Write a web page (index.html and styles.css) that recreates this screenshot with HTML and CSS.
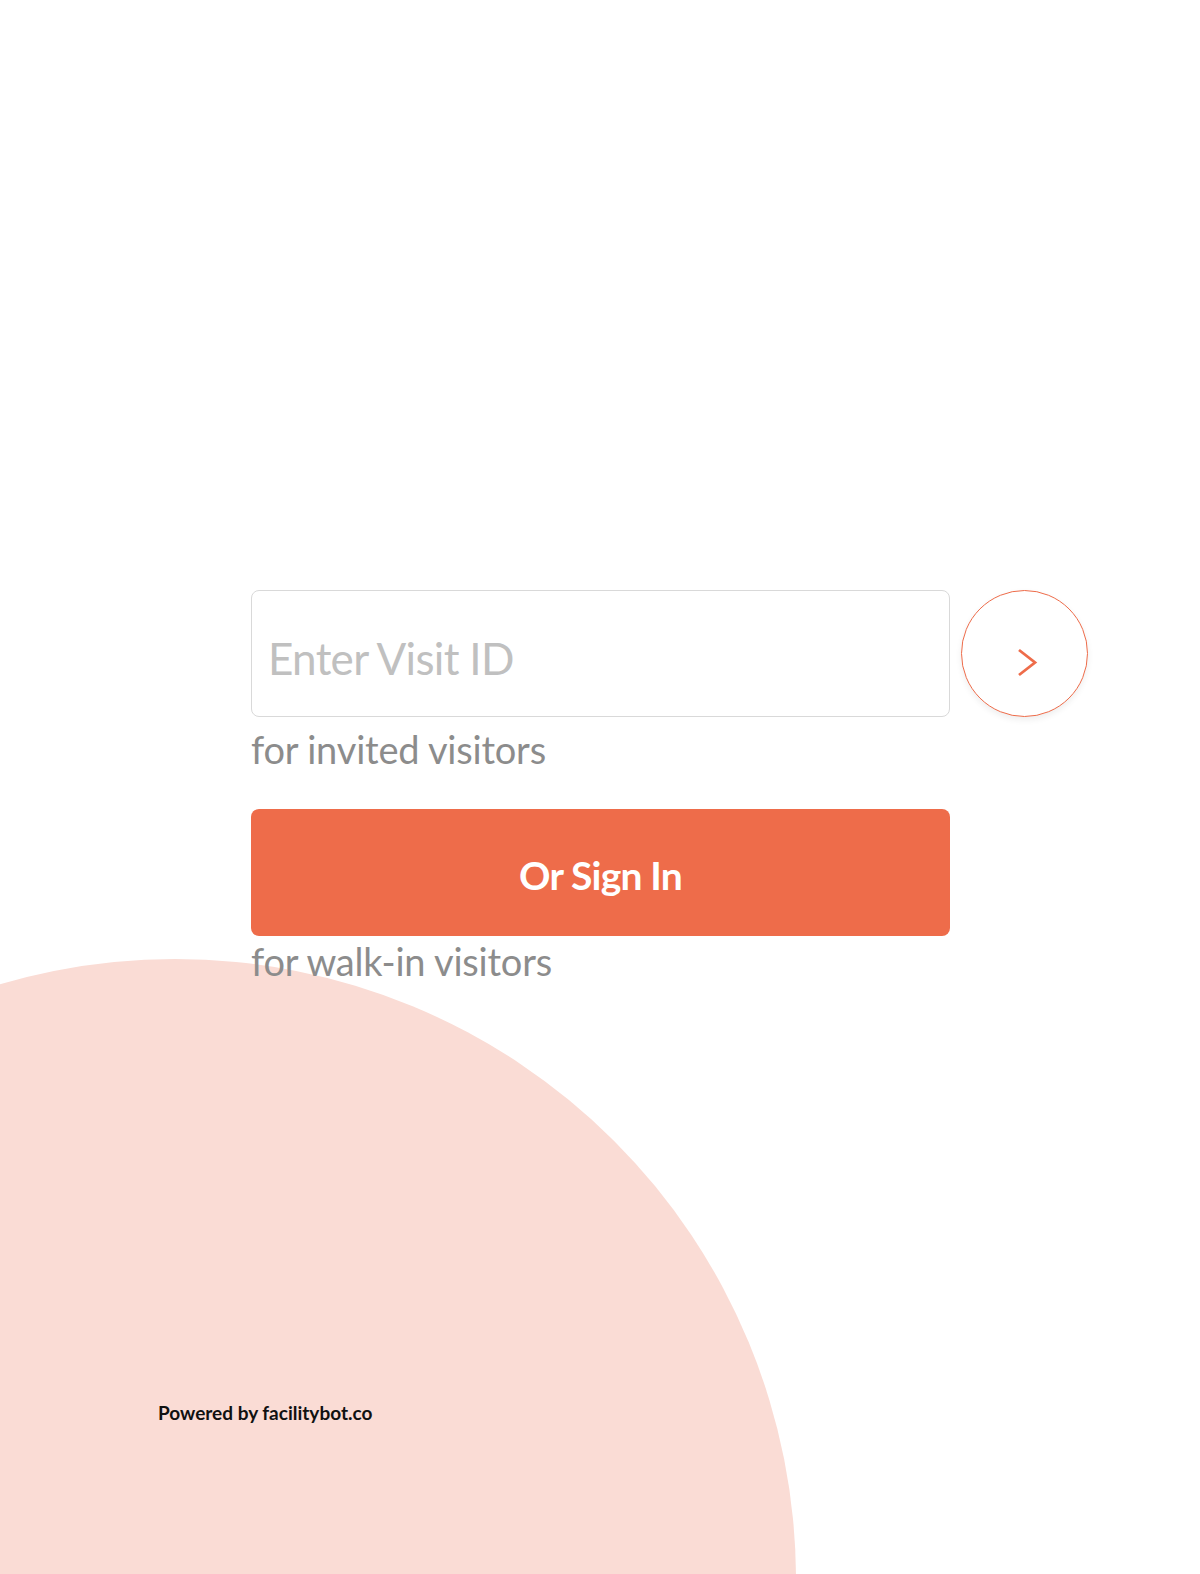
FILE: index.html
```html
<!DOCTYPE html>
<html lang="en">
<head>
    <meta charset="UTF-8">
    <title>Visitor Check-in</title>
    <link rel="stylesheet" href="styles.css">
</head>
<body>
<div class="screen">
    <div class="blob"></div>
    <div class="page">
        <form class="visit-form" id="visitForm">
            <div class="visit-row">
                <input type="text" class="visit-input" id="visitId" placeholder="Enter Visit ID">
                <button type="submit" class="go-btn" aria-label="Continue">
                    <svg width="22" height="30" viewBox="0 0 22 30">
                        <path d="M3 2 L19 14.5 L3 27" fill="none" stroke="#ee6c4a" stroke-width="2.8"/>
                    </svg>
                </button>
            </div>
            <div class="hint hint-first">for invited visitors</div>
            <button type="button" class="signin-btn">Or Sign In</button>
            <div class="hint">for walk-in visitors</div>
        </form>
        <div class="powered">Powered by facilitybot.co</div>
    </div>
</div>
</body>
</html>
```

FILE: styles.css
```css
body { margin: 0; padding: 0; background: #fff; font-family: Lato, "Open Sans", sans-serif; }
.screen { position: relative; height: 1574px; overflow: hidden; }
.blob { position: absolute; left: -446px; top: 959px; width: 1242px; height: 1242px; border-radius: 50%; background: #fadcd5; z-index: 0; }
.page { position: relative; z-index: 1; padding-top: 590px; }
.visit-form { margin-left: 251px; }
.visit-row { display: flex; gap: 11px; align-items: center; }
.visit-input { width: 699px; height: 127px; box-sizing: border-box; border: 1px solid #d9d9d9; border-radius: 8px; padding: 8px 16px 0; font-family: Lato, sans-serif; font-size: 44px; letter-spacing: -0.7px; color: #333; outline: none; background: #fff; }
.visit-input::placeholder { color: #c0c0c0; }
.go-btn { width: 127px; height: 127px; box-sizing: border-box; border-radius: 50%; border: 1px solid #ee6c4a; background: #fff; box-shadow: 0 3px 6px #0001; padding: 18px 0 0 4px; cursor: pointer; display: flex; align-items: center; justify-content: center; }
.hint { font-size: 38px; line-height: 1.2; color: #8c8c8c; margin-top: 3px; letter-spacing: -0.2px; }
.hint-first { margin-top: 10px; }
.signin-btn { display: block; margin-top: 36px; width: 699px; height: 127px; border: none; border-radius: 8px; background: #ee6c4a; color: #fff; font-family: Lato, sans-serif; font-weight: bold; font-size: 39px; letter-spacing: -0.8px; padding-top: 6px; cursor: pointer; }
.powered { margin: 418px 0 0 158px; font-size: 19px; font-weight: bold; line-height: 1.2; color: #111; }
```
